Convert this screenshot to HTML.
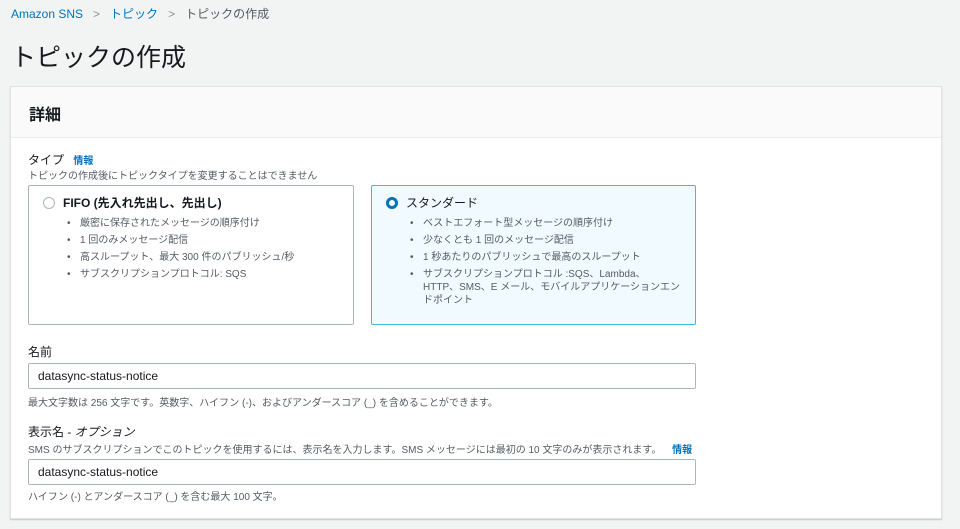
<!DOCTYPE html>
<html><head><meta charset="utf-8"><style>
*{box-sizing:border-box;margin:0;padding:0}
body{width:960px;height:529px;background:#f2f3f3;font-family:"Liberation Sans","Noto Sans CJK JP",sans-serif;color:#16191f;position:relative;overflow:hidden}
.a{position:absolute;white-space:nowrap}
.bc{top:5px;left:11px;font-size:12px;color:#545b64}
.bc .l{color:#0073bb}
.bc .s{color:#879596;margin:0 10px}
h1{position:absolute;top:38px;left:11px;font-size:25px;font-weight:400}
.card{position:absolute;left:10px;top:86px;width:932px;height:433px;background:#fff;border:1px solid #e2e4e4;box-shadow:0 1px 1px rgba(0,28,36,.2)}
.hd{height:51px;background:#fafafa;border-bottom:1px solid #eaeded;padding:14px 18px;font-size:16px;font-weight:700}
.box{position:absolute;top:185px;width:326px;height:140px;border:1px solid #aab7b8;border-radius:2px;background:#fff}
.box.sel{border-color:#44b9d6;background:#f1faff;width:325px}
.rad{position:absolute;left:14px;top:11px;width:12px;height:12px;border-radius:50%;border:1px solid #aab7b8;background:#fff}
.sel .rad{border:3px solid #0073bb}
.bt{position:absolute;left:34px;top:8px;font-size:12px;font-weight:700;color:#16191f}
.sel .bt{font-weight:400}
ul{position:absolute;left:38px;top:29px;font-size:10px;color:#545b64;line-height:17px;list-style:none;width:270px;white-space:nowrap}
li{position:relative;padding-left:13px}
li:before{content:"•";position:absolute;left:0}
li{line-height:17px}
.lbl{font-size:12px;left:28px}
.sm{font-size:10px;color:#545b64;left:28px}
.inp{position:absolute;left:28px;width:668px;height:26px;border:1px solid #aab7b8;border-radius:2px;background:#fff;padding:5px 9px;font-size:12px}
.info{color:#0073bb;font-weight:700;font-size:10px}
</style></head><body>
<div class="a bc"><span class="l">Amazon SNS</span><span class="s">&gt;</span><span class="l">トピック</span><span class="s">&gt;</span>トピックの作成</div>
<h1>トピックの作成</h1>
<div class="card"><div class="hd">詳細</div></div>
<div class="a lbl" style="top:151px">タイプ <span class="info" style="margin-left:6px">情報</span></div>
<div class="a sm" style="top:167px">トピックの作成後にトピックタイプを変更することはできません</div>
<div class="box" style="left:28px"><div class="rad"></div><div class="bt">FIFO (先入れ先出し、先出し)</div>
<ul><li>厳密に保存されたメッセージの順序付け</li><li>1 回のみメッセージ配信</li><li>高スループット、最大 300 件のパブリッシュ/秒</li><li>サブスクリプションプロトコル: SQS</li></ul></div>
<div class="box sel" style="left:371px"><div class="rad"></div><div class="bt">スタンダード</div>
<ul><li>ベストエフォート型メッセージの順序付け</li><li>少なくとも 1 回のメッセージ配信</li><li>1 秒あたりのパブリッシュで最高のスループット</li><li style="line-height:13px;margin-top:2px">サブスクリプションプロトコル :SQS、Lambda、<br>HTTP、SMS、E メール、モバイルアプリケーションエン<br>ドポイント</li></ul></div>
<div class="a lbl" style="top:343px">名前</div>
<div class="inp" style="top:363px">datasync-status-notice</div>
<div class="a sm" style="top:394px">最大文字数は 256 文字です。英数字、ハイフン (-)、およびアンダースコア (_) を含めることができます。</div>
<div class="a lbl" style="top:423px">表示名 - <i>オプション</i></div>
<div class="a sm" style="top:441px">SMS のサブスクリプションでこのトピックを使用するには、表示名を入力します。SMS メッセージには最初の 10 文字のみが表示されます。 <span class="info" style="margin-left:8px">情報</span></div>
<div class="inp" style="top:459px">datasync-status-notice</div>
<div class="a sm" style="top:488px">ハイフン (-) とアンダースコア (_) を含む最大 100 文字。</div>
</body></html>
